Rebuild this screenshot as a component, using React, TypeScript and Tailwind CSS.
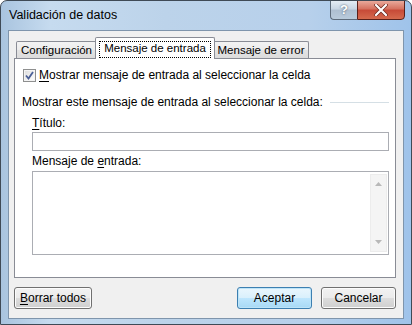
import React from "react";

function Btn({
  children,
  primary = false,
  className = "",
}: {
  children: React.ReactNode;
  primary?: boolean;
  className?: string;
}) {
  return (
    <div
      className={
        "flex h-[22px] items-center justify-center rounded-[3px] border text-[12px] text-black " +
        (primary
          ? "border-[#3c7fb1] bg-[linear-gradient(#eaf6fd_0%,#d9f0fc_50%,#bee6fd_51%,#a7d9f5_100%)] shadow-[inset_0_0_0_1px_#bde4f8]"
          : "border-[#707070] bg-[linear-gradient(#f2f2f2_0%,#ebebeb_50%,#dddddd_51%,#cfcfcf_100%)] shadow-[inset_0_0_0_1px_#fcfcfc]") +
        " " +
        className
      }
    >
      {children}
    </div>
  );
}

function Tab({
  children,
  active = false,
  className = "",
}: {
  children: React.ReactNode;
  active?: boolean;
  className?: string;
}) {
  if (active) {
    return (
      <div
        className={
          "relative z-10 -mx-[2px] mb-[-1px] flex h-[22px] items-center whitespace-nowrap rounded-t-[2px] border border-b-0 border-[#898c95] bg-white px-[3px] pt-px text-[11.5px] " +
          className
        }
      >
        <span className="flex h-[17px] w-full items-center justify-center border border-dotted border-black">
          {children}
        </span>
      </div>
    );
  }
  return (
    <div
      className={
        "flex h-[17px] items-center justify-center whitespace-nowrap rounded-t-[2px] border border-b-0 border-[#898c95] bg-[linear-gradient(#f3f3f3_0%,#ececec_50%,#e3e3e3_51%,#dcdcdc_100%)] pt-px text-[11.5px] " +
        className
      }
    >
      {children}
    </div>
  );
}

export default function App() {
  return (
    <div
      className="flex h-[325px] w-[412px] flex-col overflow-hidden rounded-t-[7px] border border-[#3f4a56] bg-[linear-gradient(90deg,#a9c4df_0%,#c6dbef_12%,#bcd3ea_40%,#b7d0eb_75%,#9fc3ea_100%)] text-[12px] text-black"
      style={{ fontFamily: '"Segoe UI", "Liberation Sans", Arial, sans-serif' }}
    >
      {/* title bar */}
      <div className="flex h-[29px] items-start justify-between">
        <div className="pl-[8px] pt-[5px] text-[12.5px] text-black">Validación de datos</div>
        <div className="mr-[6px] -mt-px flex h-[20px]">
          <div className="flex w-[27px] items-center justify-center rounded-bl-[4px] border border-r-0 border-[#5d6b7b] bg-[linear-gradient(#e4ecf4_0%,#c7d5e3_45%,#aebfd1_50%,#b9cbdc_100%)] text-[13px] font-bold text-white [text-shadow:0_0_2px_#3a4a5c]">
            ?
          </div>
          <div className="flex w-[48px] items-center justify-center rounded-br-[4px] border border-[#5a2019] bg-[linear-gradient(#e9a99b_0%,#d5705e_45%,#c74a37_50%,#d56a4e_100%)]">
            <svg width="14" height="12" viewBox="0 0 14 12">
              <path
                d="M2 1 L12 11 M12 1 L2 11"
                stroke="#6b2a20"
                strokeWidth="3.6"
                strokeLinecap="round"
              />
              <path
                d="M2 1 L12 11 M12 1 L2 11"
                stroke="#ffffff"
                strokeWidth="2.2"
                strokeLinecap="round"
              />
            </svg>
          </div>
        </div>
      </div>

      {/* client area */}
      <div className="mx-[7px] flex h-[289px] flex-col border border-[#7f95ac] bg-[#f0f0f0] pl-[5px] pr-[7px] pt-[6px]">
        {/* tabs */}
        <div className="flex items-end pl-[2px]">
          <Tab className="w-[81px]">Configuración</Tab>
          <Tab active className="w-[120px]">
            Mensaje de entrada
          </Tab>
          <Tab className="w-[96px]">Mensaje de error</Tab>
        </div>

        {/* panel */}
        <div className="flex h-[220px] flex-col border border-[#898c95] bg-white">
          <div className="mt-[8px] flex h-[16px] items-center pl-[8px]">
            <div className="flex h-[13px] w-[13px] items-center justify-center border border-[#8e8f8f] bg-[linear-gradient(135deg,#dcdcdc,#ffffff)] shadow-[inset_0_0_0_1px_#f4f4f4]">
              <svg width="9" height="9" viewBox="0 0 9 9">
                <path
                  d="M1 4.5 L3.5 7.5 L8 1"
                  fill="none"
                  stroke="#4a5f97"
                  strokeWidth="1.8"
                />
              </svg>
            </div>
            <span className="ml-[3px]">
              <span className="underline underline-offset-2">M</span>ostrar mensaje de entrada al seleccionar la celda
            </span>
          </div>

          <div className="mt-[11px] flex h-[16px] items-center pl-[7px] pr-[6px]">
            <span className="whitespace-nowrap">
              Mostrar este mensaje de entrada al seleccionar la celda:
            </span>
            <div className="ml-[7px] h-px flex-1 bg-[#d5dfe5]" />
          </div>

          <div className="flex flex-col pl-[17px] pr-[6px]">
            <div className="mt-[5px] h-[16px] leading-[16px]">
              <span className="underline underline-offset-2">T</span>ítulo:
            </div>
            <div className="mt-px h-[19px] border border-[#abadb3] bg-white" />
            <div className="mt-[2px] h-[16px] leading-[16px]">
              Mensaje de <span className="underline underline-offset-2">e</span>ntrada:
            </div>
            <div className="mt-[2px] flex h-[84px] justify-end border border-[#abadb3] bg-white p-px">
              <div className="my-px flex w-[17px] flex-col items-center justify-between border border-[#ececec] bg-[#f4f4f4] py-[7px]">
                <svg width="7" height="4" viewBox="0 0 7 4">
                  <path d="M0 4 L3.5 0 L7 4 Z" fill="#b8b8b8" />
                </svg>
                <svg width="7" height="4" viewBox="0 0 7 4">
                  <path d="M0 0 L3.5 4 L7 0 Z" fill="#b8b8b8" />
                </svg>
              </div>
            </div>
          </div>
        </div>

        {/* buttons */}
        <div className="mt-[9px] flex items-center">
          <Btn className="w-[78px]">
            <span>
              <span className="underline underline-offset-2">B</span>orrar todos
            </span>
          </Btn>
          <div className="flex-1" />
          <Btn primary className="w-[75px]">
            Aceptar
          </Btn>
          <Btn className="ml-[9px] w-[75px]">Cancelar</Btn>
        </div>
      </div>
    </div>
  );
}
